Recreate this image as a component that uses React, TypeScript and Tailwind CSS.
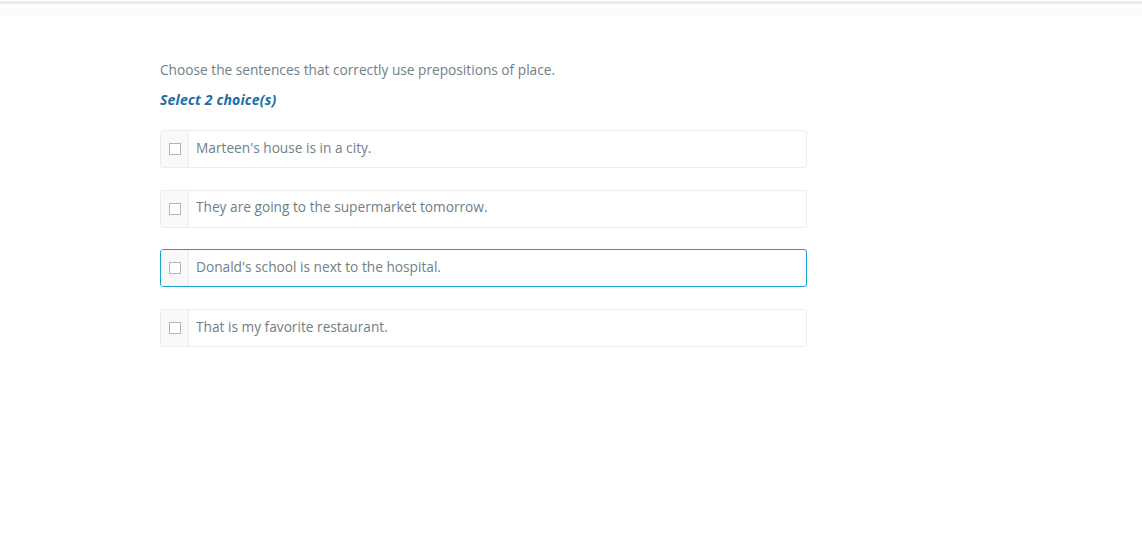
import { useState } from "react";

const choices = [
  "Marteen's house is in a city.",
  "They are going to the supermarket tomorrow.",
  "Donald's school is next to the hospital.",
  "That is my favorite restaurant.",
];

export default function App() {
  const [focused] = useState(2);

  return (
    <div className="min-h-[547px] bg-white" style={{ fontFamily: '"Open Sans", "Noto Sans", sans-serif' }}>
      {/* top bar */}
      <div className="h-[3px] bg-[#ebebeb] mt-px" />
      <div className="h-[13px] bg-[#fbfdfc]" />

      <div className="pl-[160px] pt-[43px] w-[807px] box-content">
        <p className="text-[13.7px] leading-5 text-[#6f8087]">
          Choose the sentences that correctly use prepositions of place.
        </p>
        <p className="mt-[10px] text-[14px] leading-5 font-bold italic tracking-[0.2px] text-[#1a6ea6]">
          Select 2 choice(s)
        </p>

        <div className="mt-[20px] flex flex-col gap-[21.7px]">
          {choices.map((c, i) => (
            <div
              key={c}
              className={
                "flex h-[38px] w-[647px] rounded-[3px] border overflow-hidden " +
                (i === focused ? "border-[#1aa3d0]" : "border-[#ececec]")
              }
            >
              <div className="w-[28px] shrink-0 flex items-center justify-center bg-[#f9f9f9] border-r border-[#ececec]">
                <span className="w-[12px] h-[12px] border border-[#b5b5b5] bg-white" />
              </div>
              <div className="flex items-center pl-[7px] pb-[2px] text-[13.7px] text-[#6f8087]">{c}</div>
            </div>
          ))}
        </div>
      </div>
    </div>
  );
}
